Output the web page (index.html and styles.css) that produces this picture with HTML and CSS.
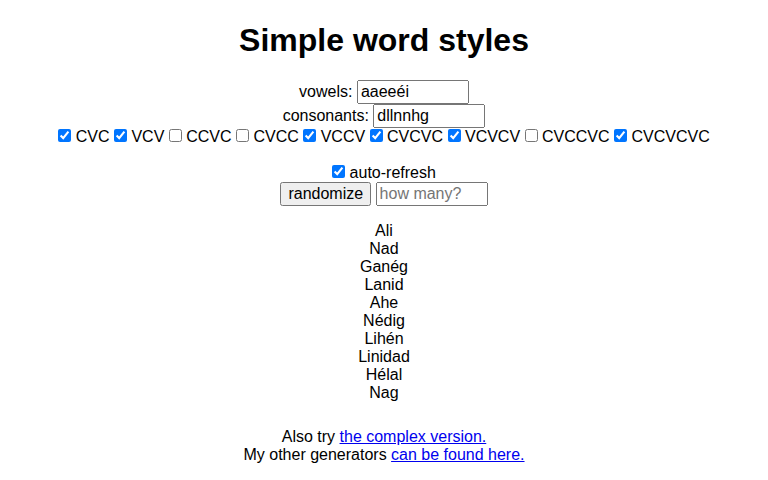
FILE: index.html
```html
<!DOCTYPE html>
<html lang="en">
<head>
<meta charset="utf-8">
<title>Simple word styles</title>
<link rel="stylesheet" href="styles.css">
</head>
<body>
<main class="page">
  <h1 class="title">Simple word styles</h1>
  <div class="controls">
    <label class="field">vowels: <input class="text-input" type="text" value="aaeeéi"></label><br>
    <label class="field">consonants: <input class="text-input" type="text" value="dllnnhg"></label><br>
    <label><input class="check" type="checkbox" checked> CVC</label>
    <label><input class="check" type="checkbox" checked> VCV</label>
    <label><input class="check" type="checkbox"> CCVC</label>
    <label><input class="check" type="checkbox"> CVCC</label>
    <label><input class="check" type="checkbox" checked> VCCV</label>
    <label><input class="check" type="checkbox" checked> CVCVC</label>
    <label><input class="check" type="checkbox" checked> VCVCV</label>
    <label><input class="check" type="checkbox"> CVCCVC</label>
    <label><input class="check" type="checkbox" checked> CVCVCVC</label><br>
    <br>
    <label><input class="check" type="checkbox" checked> auto-refresh</label><br>
    <button class="btn" type="button">randomize</button>
    <input class="text-input" type="text" placeholder="how many?">
  </div>
  <p class="words">Ali<br>Nad<br>Ganég<br>Lanid<br>Ahe<br>Nédig<br>Lihén<br>Linidad<br>Hélal<br>Nag</p>
  <p class="footer">Also try <a href="#">the complex version.</a><br>
  My other generators <a href="#">can be found here.</a></p>
</main>
</body>
</html>
```

FILE: styles.css
```css
body {
  margin: 0;
  font-family: "Liberation Sans", Arial, sans-serif;
  font-size: 16px;
  color: #000;
  background: #fff;
}

.page {
  padding: 0 8px;
  text-align: center;
}

.title {
  font-size: 32px;
  font-weight: bold;
  margin: 22px 0 21px;
}

.text-input {
  font-family: inherit;
  font-size: 16px;
  width: 112px;
  height: 24px;
  box-sizing: border-box;
  padding: 1px 2px;
}

.check {
  margin: 0;
  width: 13px;
  height: 13px;
}

.btn {
  font-family: inherit;
  font-size: 16px;
  height: 24px;
  padding: 1px 6px;
}

.words {
  margin: 16px 0;
}

.footer {
  margin: 26px 0 0;
}

a {
  color: #0000ee;
}
```
